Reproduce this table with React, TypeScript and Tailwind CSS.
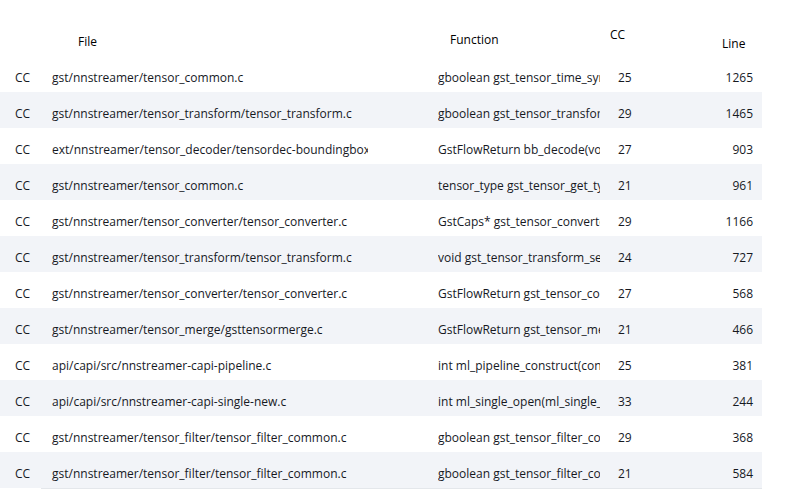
const rows = [
  ["gst/nnstreamer/tensor_common.c", "gboolean gst_tensor_time_sync_buffer_from_collectpad", "25", "1265"],
  ["gst/nnstreamer/tensor_transform/tensor_transform.c", "gboolean gst_tensor_transform_set_option_data", "29", "1465"],
  ["ext/nnstreamer/tensor_decoder/tensordec-boundingbox.c", "GstFlowReturn bb_decode(void **pdata)", "27", "903"],
  ["gst/nnstreamer/tensor_common.c", "tensor_type gst_tensor_get_type(const gchar *typestr)", "21", "961"],
  ["gst/nnstreamer/tensor_converter/tensor_converter.c", "GstCaps* gst_tensor_converter_query_caps", "29", "1166"],
  ["gst/nnstreamer/tensor_transform/tensor_transform.c", "void gst_tensor_transform_set_property", "24", "727"],
  ["gst/nnstreamer/tensor_converter/tensor_converter.c", "GstFlowReturn gst_tensor_converter_chain", "27", "568"],
  ["gst/nnstreamer/tensor_merge/gsttensormerge.c", "GstFlowReturn gst_tensor_merge_collected", "21", "466"],
  ["api/capi/src/nnstreamer-capi-pipeline.c", "int ml_pipeline_construct(const char *pipeline_description)", "25", "381"],
  ["api/capi/src/nnstreamer-capi-single-new.c", "int ml_single_open(ml_single_h *single)", "33", "244"],
  ["gst/nnstreamer/tensor_filter/tensor_filter_common.c", "gboolean gst_tensor_filter_common_set_property", "29", "368"],
  ["gst/nnstreamer/tensor_filter/tensor_filter_common.c", "gboolean gst_tensor_filter_common_get_property", "21", "584"],
];

export default function App() {
  return (
    <div
      className="w-[786px] h-[496px] bg-white overflow-hidden text-[12px] leading-[18px] text-[#16191f]"
      style={{ fontFamily: '"Open Sans", "Noto Sans", sans-serif' }}
    >
      {/* header */}
      <div className="flex h-[56px] text-black">
        <div className="w-[78px]" />
        <div className="w-[372px] pt-[33px]">File</div>
        <div className="w-[160px] pt-[31px]">Function</div>
        <div className="w-[112px] pt-[26px]">CC</div>
        <div className="pt-[35px]">Line</div>
      </div>

      {/* rows */}
      <div className="w-[762px] flex flex-col">
        {rows.map((r, i) => (
          <div
            key={i}
            className={`flex items-center h-[36px] pt-[8px] whitespace-nowrap ${i % 2 === 1 ? "bg-[#f2f4f8]" : "bg-white"}`}
          >
            <div className="w-[41px] shrink-0 pl-[15px]">CC</div>
            <div className="w-[327px] shrink-0 pl-[11px] overflow-hidden">{r[0]}</div>
            <div className="w-[162px] shrink-0 ml-[70px] overflow-hidden">{r[1]}</div>
            <div className="w-[80px] shrink-0 pl-[18px]">{r[2]}</div>
            <div className="flex-1 text-right pr-[9px]">{r[3]}</div>
          </div>
        ))}
        <div className="ml-[41px] h-px bg-[#e4e7eb]" />
      </div>
    </div>
  );
}
